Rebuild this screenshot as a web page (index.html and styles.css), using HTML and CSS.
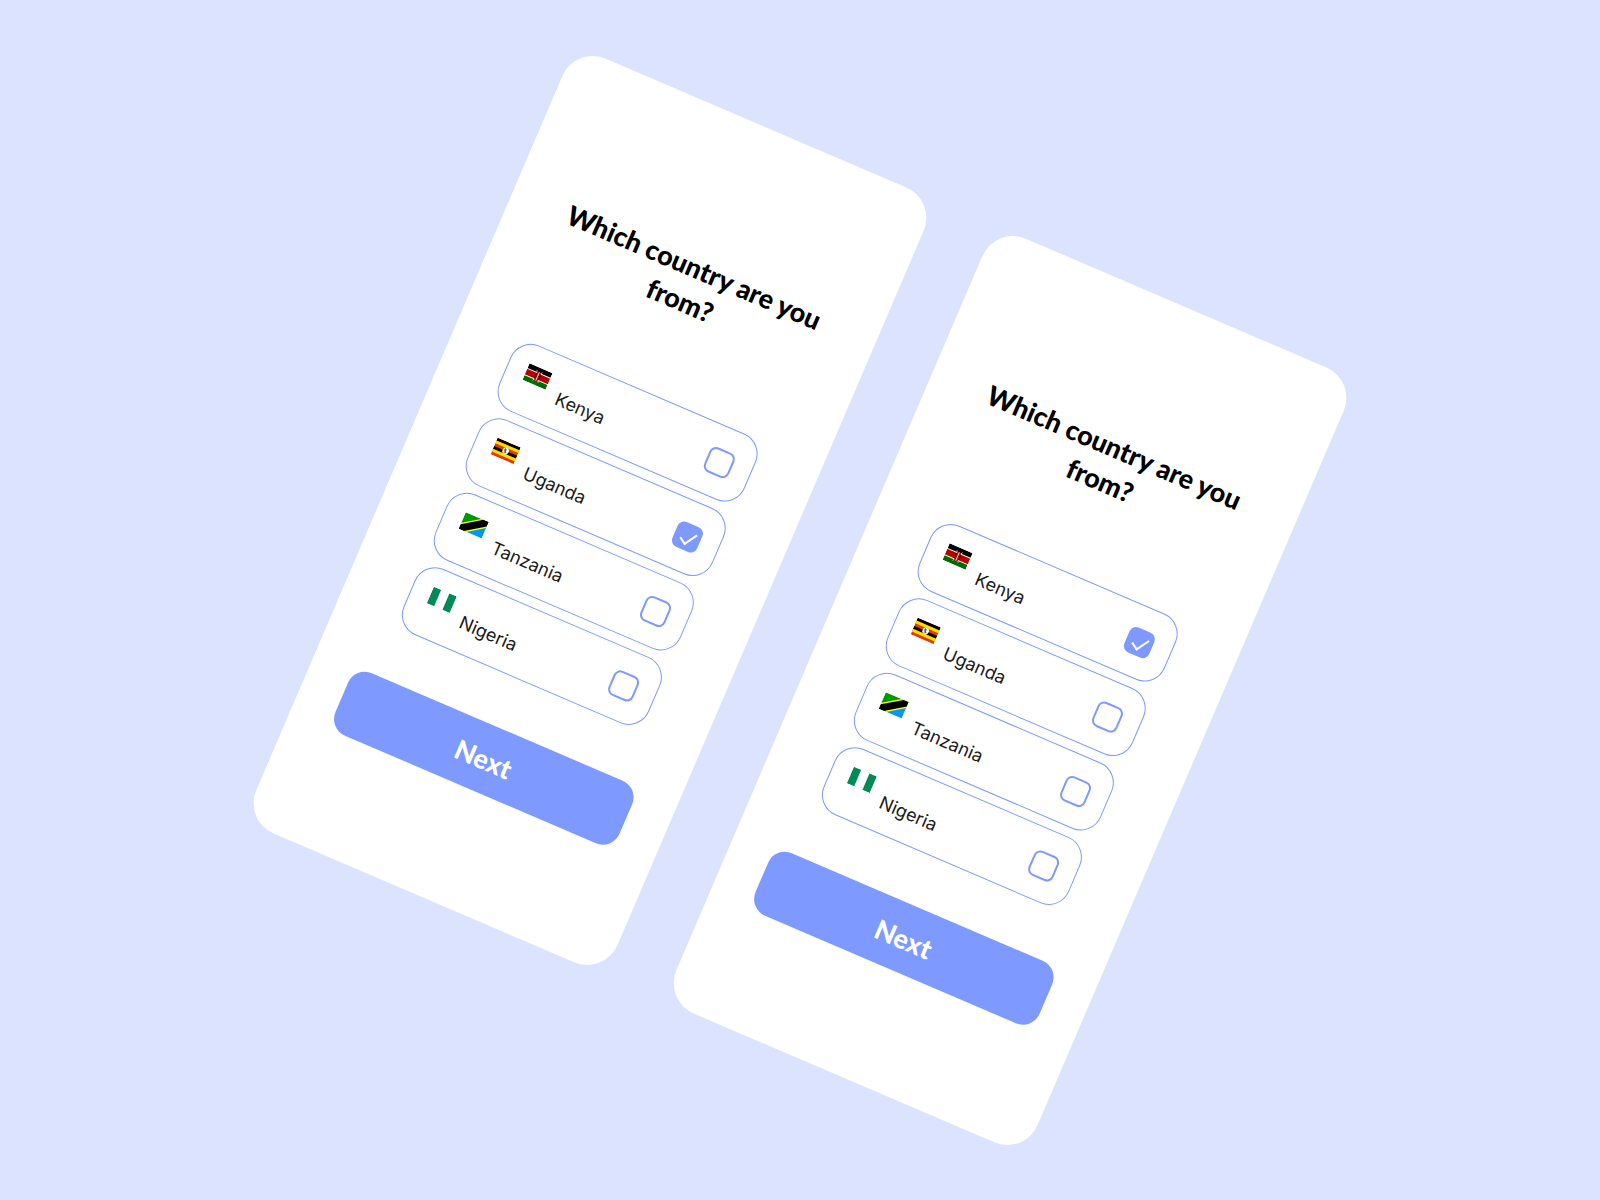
FILE: index.html
```html
<!DOCTYPE html>
<html lang="en">
<head>
    <meta charset="UTF-8">
    <meta name="viewport" content="width=device-width, initial-scale=1.0">
    <title>Select Country</title>
    <link rel="stylesheet" href="styles.css">
</head>
<body>
    <!-- Flags shared by both screens -->
    <svg class="sprite" aria-hidden="true">
        <symbol id="kenya" viewBox="0 0 25 18">
            <rect width="25" height="18" fill="#fff"/>
            <rect width="25" height="5" fill="#000"/>
            <rect y="6" width="25" height="6" fill="#b80000"/>
            <rect y="13" width="25" height="5" fill="#006b00"/>
            <path d="M9.5 3.5 15.5 14.5M15.5 3.5 9.5 14.5" stroke="#fff" stroke-width=".7"/>
            <ellipse cx="12.5" cy="9" rx="2.8" ry="4.8" fill="#b80000"/>
            <path d="M10.2 6Q11.8 9 10.2 12 8.8 9 10.2 6ZM14.8 6Q13.2 9 14.8 12 16.2 9 14.8 6Z" fill="#000"/>
            <path d="M12.5 4.5V13.5" stroke="#fff" stroke-width=".8"/>
        </symbol>
        <symbol id="uganda" viewBox="0 0 25 18">
            <rect width="25" height="18" fill="#e23a08"/>
            <path d="M0 0H25V3H0ZM0 9H25V12H0Z" fill="#000"/>
            <path d="M0 3H25V6H0ZM0 12H25V15H0Z" fill="#ffe000"/>
            <circle cx="12.5" cy="9" r="3.3" fill="#fff"/>
            <path d="M11 6.5 13 7.5 12.6 9 14 10.4 12.4 11.8 11.6 10 10.8 8.6Z" fill="#555"/>
            <path d="M12.7 7.4 13.6 7.8M11.7 11 11.2 11.8" stroke="#c33" stroke-width=".6"/>
        </symbol>
        <symbol id="tanzania" viewBox="0 0 25 18">
            <path d="M0 0H25L0 18Z" fill="#090"/>
            <path d="M25 0V18H0Z" fill="#0098ff"/>
            <path d="M0 18V11.5L17 0H25V6.5L8 18Z" fill="#ff0"/>
            <path d="M0 18V13.2L19.5 0H25V4.8L5.5 18Z" fill="#000"/>
        </symbol>
        <symbol id="nigeria" viewBox="0 0 25 18">
            <rect width="25" height="18" fill="#fff"/>
            <path d="M0 0H8V18H0ZM17 0H25V18H17Z" fill="#008a56"/>
        </symbol>
    </svg>

    <main class="screens">
        <!-- First screen -->
        <form class="screen">
            <h2 class="title">Which country are you from?</h2>
            <div class="countries">
                <label class="country">
                    <svg class="flag" aria-hidden="true"><use href="#kenya"/></svg>
                    <span class="name">Kenya</span>
                    <input type="checkbox" name="country" value="kenya">
                </label>
                <label class="country">
                    <svg class="flag" aria-hidden="true"><use href="#uganda"/></svg>
                    <span class="name">Uganda</span>
                    <input type="checkbox" name="country" value="uganda" checked>
                </label>
                <label class="country">
                    <svg class="flag" aria-hidden="true"><use href="#tanzania"/></svg>
                    <span class="name">Tanzania</span>
                    <input type="checkbox" name="country" value="tanzania">
                </label>
                <label class="country">
                    <svg class="flag" aria-hidden="true"><use href="#nigeria"/></svg>
                    <span class="name">Nigeria</span>
                    <input type="checkbox" name="country" value="nigeria">
                </label>
            </div>
            <button type="button" class="next">Next</button>
        </form>

        <!-- Second screen -->
        <form class="screen">
            <h2 class="title">Which country are you from?</h2>
            <div class="countries">
                <label class="country">
                    <svg class="flag" aria-hidden="true"><use href="#kenya"/></svg>
                    <span class="name">Kenya</span>
                    <input type="checkbox" name="country" value="kenya" checked>
                </label>
                <label class="country">
                    <svg class="flag" aria-hidden="true"><use href="#uganda"/></svg>
                    <span class="name">Uganda</span>
                    <input type="checkbox" name="country" value="uganda">
                </label>
                <label class="country">
                    <svg class="flag" aria-hidden="true"><use href="#tanzania"/></svg>
                    <span class="name">Tanzania</span>
                    <input type="checkbox" name="country" value="tanzania">
                </label>
                <label class="country">
                    <svg class="flag" aria-hidden="true"><use href="#nigeria"/></svg>
                    <span class="name">Nigeria</span>
                    <input type="checkbox" name="country" value="nigeria">
                </label>
            </div>
            <button type="button" class="next">Next</button>
        </form>
    </main>
</body>
</html>
```

FILE: styles.css
```css
* {
    box-sizing: border-box;
}

body {
    margin: 0;
    min-height: 100vh;
    display: flex;
    justify-content: center;
    align-items: center;
    overflow: hidden;
    background-color: #dce3ff;
    font-family: Inter, Arial, sans-serif;
}

.sprite {
    position: absolute;
    width: 0;
    height: 0;
}

/* Both screens are tilted together */
.screens {
    display: flex;
    gap: 64px;
    transform: rotate(23.2deg);
}

.screen {
    display: flex;
    flex-direction: column;
    width: 393px;
    padding: 139px 42px 118px;
    border-radius: 33px;
    background-color: #ffffff;
}

.title {
    margin: 0 0 79px;
    font-family: Lato, Arial, sans-serif;
    font-size: 27px;
    font-weight: 900;
    line-height: 36px;
    text-align: center;
    color: #000000;
}

/* Country list */
.countries {
    display: flex;
    flex-direction: column;
    gap: 9px;
    margin: 0 21px 52px;
}

.country {
    display: flex;
    align-items: flex-start;
    gap: 13px;
    min-height: 72px;
    padding: 19px;
    border: 1px solid #7e99ff;
    border-radius: 22px;
    cursor: pointer;
}

.flag {
    width: 25px;
    height: 18px;
}

.name {
    flex: 1;
    align-self: flex-end;
    font-size: 18px;
    line-height: 20px;
    color: #1c1c1c;
}

.country input {
    position: relative;
    align-self: center;
    appearance: none;
    width: 27px;
    height: 27px;
    margin: 0;
    border: 2px solid #7e99ff;
    border-radius: 7px;
    cursor: pointer;
}

.country input:checked {
    background-color: #7e99ff;
}

/* Tick mark */
.country input:checked::after {
    content: "";
    position: absolute;
    left: 8px;
    top: 3px;
    width: 7px;
    height: 14px;
    border: solid #ffffff;
    border-width: 0 2px 2px 0;
    transform: rotate(33deg);
}

.next {
    height: 68px;
    border: none;
    border-radius: 18px;
    background-color: #7e99ff;
    color: #ffffff;
    font-family: Lato, Arial, sans-serif;
    font-size: 27px;
    font-weight: 900;
    cursor: pointer;
}
```
